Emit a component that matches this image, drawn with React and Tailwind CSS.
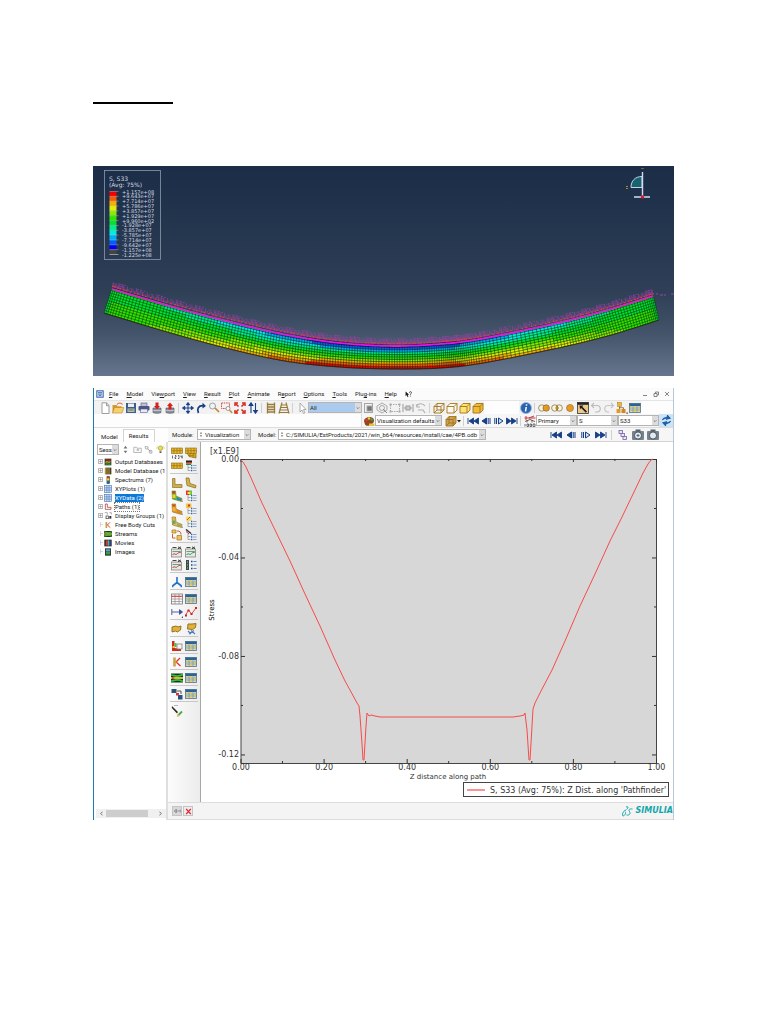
import React from "react";

/* ---------- small drawing helpers ---------- */

const N = "#173f86";

function Table() {
  return (
    <g>
      <rect x="0.5" y="1.5" width="11" height="9" fill="#dcd9b4" stroke="#56707f" strokeWidth="0.8" />
      <rect x="0.5" y="1.5" width="11" height="2.6" fill="#2a6496" />
      <path d="M1 6H11M1 8H11M4 4.500V10M8 4.500V10" stroke="#6f93a4" strokeWidth="0.7" />
      <path d="M2 5h1.500M5 5h2M9 7h1.500M5 9h2" stroke="#f3c73c" strokeWidth="1" />
    </g>
  );
}

function Bullets({ children }) {
  return (
    <g>
      {children}
      <path d="M3 5V10.500H5.500M3 7.500H5.500" stroke="#8a8a8a" strokeWidth="0.7" fill="none" />
      <path d="M6 5.500h1.300M6 8h1.300M6 10.500h1.300" stroke="#2366b8" strokeWidth="1.300" />
      <path d="M8 5.500h3.500M8 8h3.500M8 10.500h3.500" stroke="#7a9cc4" strokeWidth="0.9" />
    </g>
  );
}

function LShape({ fill = "#d9b23c", colors }) {
  return (
    <g>
      <path d="M1 1h3.500l0.500 5 6 2.500-0.500 3L1.500 9Z" fill={fill} stroke="#8c6a12" strokeWidth="0.600" />
      {colors && <path d="M1.500 1.500h2.500v2h-2.500z" fill={colors[0]} />}
      {colors && <path d="M1.500 4.500h3v3.500h-3z" fill={colors[1]} />}
      {colors && <path d="M6 7.500l4 1.500v1.500l-4-1z" fill={colors[2]} />}
      <path d="M11 11.500l1-1v1z" fill="#222" />
    </g>
  );
}

function Mesh({ y = 1 }) {
  return (
    <g>
      <rect x="0.500" y={y} width="11" height="5.500" fill="#e9b52c" stroke="#8c6a12" strokeWidth="0.600" />
      <path d={`M3 ${y}v5.500M6 ${y}v5.500M9 ${y}v5.500M0.500 ${y + 2.7}h11`} stroke="#8c6a12" strokeWidth="0.600" />
    </g>
  );
}

function XYPlotGlyph({ line = "#c33" }) {
  return (
    <g>
      <rect x="0.500" y="3" width="10" height="8" fill="#e4e8e4" stroke="#777" strokeWidth="0.700" />
      <path d="M1.500 1.500h4M7 0.800l3 2M10 0.800l-3 2" stroke="#333" strokeWidth="0.900" />
      <path d="M1.500 5.500h8" stroke="#4b8f5f" strokeWidth="0.800" />
      <path d="M1.500 9c2-3 3 1 5-1.500 1-1 2-1 3.500-1.500" stroke={line} strokeWidth="1" fill="none" />
    </g>
  );
}

function Cube({ fill, faces }) {
  return (
    <g stroke="#a3741a" strokeWidth="0.900" fill={fill}>
      <path d="M1 4.500L4 1.500h7v6.500L8 11H1Z" />
      <path d="M1 4.500h7V11M8 4.500l3-3" fill="none" />
      {faces && <path d="M4 1.500V8h7M4 8l-3 3" fill="none" />}
    </g>
  );
}

function Camera({ mark }) {
  return (
    <g>
      <rect x="0" y="2" width="12" height="9" rx="1" fill="#76838c" />
      <path d="M3.500 0.500h5v2h-5z" fill="#55626b" />
      <circle cx="6" cy="6.500" r="3.600" fill="#e2e9ee" stroke="#3c4a55" strokeWidth="0.900" />
      {mark && <path d="M4.500 6.500h3M6 5v3" stroke="#41617d" strokeWidth="0.900" />}
    </g>
  );
}

const glyphs = {
  app: <g><rect x="0.500" y="0.500" width="11" height="11" fill="#2a5ba6" /><rect x="2" y="2" width="8" height="8" fill="#e8f0fb" /><path d="M3 4h6M3 6.200h6M4 8.400h4" stroke="#23508f" strokeWidth="1.200" /></g>,
  file: <path d="M3 0.800h4.500L10 3.500v8H3ZM7.500 0.800v3H10" fill="#fff" stroke="#888" strokeWidth="0.800" />,
  open: <g><path d="M0.500 11V3h4l1 1.200h4V11Z" fill="#d39a2f" /><path d="M0.500 11l2-5.500H12L10 11Z" fill="#f7cf6c" stroke="#b47d1b" strokeWidth="0.500" /><path d="M5 2.500c1.500-2 4-2 5.500 0" stroke="#e0672c" strokeWidth="1.200" fill="none" /></g>,
  save: <g><rect x="1" y="1" width="10" height="10" fill="#3d5f8c" /><rect x="3" y="1.500" width="6" height="3.500" fill="#e8edf3" /><rect x="2.500" y="6.500" width="7" height="3.500" fill="#b9c2b3" /><path d="M3.500 8h5" stroke="#5f7747" /></g>,
  print: <g><rect x="3" y="1" width="6" height="4" fill="#b9bfd4" stroke="#555e86" strokeWidth="0.600" /><rect x="0.500" y="4" width="11" height="4.500" rx="1" fill="#4d5685" /><rect x="2.500" y="7" width="7" height="3.500" fill="#e8eaf2" stroke="#555e86" strokeWidth="0.600" /></g>,
  dbDown: <g><path d="M2 6h8v4.500c-2 1-6 1-8 0Z" fill="#8b929d" stroke="#4a505b" strokeWidth="0.600" /><path d="M2 8.500h8" stroke="#dfe3e9" strokeWidth="0.600" /><path d="M4.500 0.500h3V4H9L6 7.500 3 4h1.500Z" fill="#d81e1e" /></g>,
  dbUp: <g><path d="M2 6h8v4.500c-2 1-6 1-8 0Z" fill="#8b929d" stroke="#4a505b" strokeWidth="0.600" /><path d="M2 8.500h8" stroke="#dfe3e9" strokeWidth="0.600" /><path d="M4.500 7.500V4H3L6 0.500 9 4H7.500v3.500Z" fill="#d81e1e" /></g>,
  move: <path d="M6 1.500v9M1.500 6h9M6 0.500L4.300 2.700h3.400ZM6 11.500L4.300 9.300h3.400ZM0.500 6l2.200-1.700v3.400ZM11.500 6L9.300 4.300v3.400Z" stroke={N} fill={N} strokeWidth="1" />,
  rotate: <g><path d="M3.500 11C1.500 7 3.500 3.500 8 3.700" stroke={N} strokeWidth="1.700" fill="none" /><path d="M7.500 0.800L11 4 7.500 6.500Z" fill={N} /></g>,
  zoom: <g><circle cx="4.500" cy="4" r="3" fill="#eef3f6" stroke="#9aa0a4" /><path d="M7 6l4 4" stroke="#c2872b" strokeWidth="1.700" /></g>,
  zoomBox: <g><rect x="0.500" y="1" width="8" height="5.500" fill="none" stroke="#d33" strokeDasharray="1.500 0.800" strokeWidth="0.900" /><circle cx="7" cy="6.500" r="2" fill="#fff" stroke="#888" strokeWidth="0.800" /><path d="M8.500 8l2.700 3" stroke="#c2872b" strokeWidth="1.400" /></g>,
  fit: <g stroke="#d8281c" fill="none" strokeWidth="1.500"><path d="M1 4V1h3M8 1h3v3M11 8v3H8M4 11H1V8" /><path d="M1.500 1.500l3 3M10.500 1.500l-3 3M1.500 10.500l3-3M10.500 10.500l-3-3" /></g>,
  updown: <path d="M4 2v9M8.500 1v9M4 0.800L2.200 3.500h3.600ZM8.500 11.200L6.700 8.500h3.600Z" stroke={N} fill={N} strokeWidth="1.100" />,
  ladder: <path d="M2.500 0.500v11M9.500 0.500v11M2.500 2.500h7M2.500 5h7M2.500 7.500h7M2.500 10h7" stroke="#9a7a38" strokeWidth="1.300" />,
  ladderPersp: <path d="M4 0.500L1 11.500M8 0.500L11 11.500M3.500 3h5M3 5.500h6.500M2 8h8M1.500 10.500h9.500" stroke="#9a7a38" strokeWidth="1.200" />,
  pointer: <path d="M4 1v9l2-2 1.500 3.500 1.300-0.600L7.500 7.500H10Z" fill="#fff" stroke="#999" strokeWidth="0.800" />,
  pick: <g fill="none" stroke="#a5a5a5"><rect x="1.500" y="1.500" width="8" height="9" /><rect x="4" y="4" width="5" height="5" fill="#777" /></g>,
  pick2: <g fill="none" stroke="#aaa"><path d="M1 4l5-3 5 3v4l-5 3-5-3z" /><circle cx="6" cy="6" r="2.500" /><path d="M7 7l4 4" stroke="#888" /></g>,
  pick3: <g><rect x="1.500" y="2.500" width="9" height="7" fill="none" stroke="#aaa" strokeDasharray="1.500 1" /><path d="M0.500 1.500h2v2h-2zM9.500 1.500h2v2h-2zM0.500 8.500h2v2h-2zM9.500 8.500h2v2h-2z" fill="#aaa" /></g>,
  pick4: <g stroke="#999" fill="none"><path d="M1 2v8M11 2v8M2 6h8" /><rect x="4" y="4" width="4" height="4" fill="#ccc" /></g>,
  pick5: <path d="M1 4c3-3 7-3 9 0M2 2v3h3M3 8h5l2 3" fill="none" stroke="#b0b0b0" strokeWidth="1.200" />,
  cubeWire: <Cube fill="none" faces />,
  cubeHidden: <Cube fill="#fffaf0" />,
  cubeLight: <Cube fill="#ffe372" />,
  cubeFull: <Cube fill="#efbb36" />,
  cubeTan: <Cube fill="#c9a35a" faces />,
  info: <g><circle cx="6" cy="6" r="5.500" fill="#2b62b0" stroke="#9db9dd" strokeWidth="0.800" /><path d="M6.500 2.300v1.400M6.200 5L5.500 9.500" stroke="#fff" strokeWidth="1.500" /></g>,
  union: <g stroke="#7e6a36" strokeWidth="0.700"><circle cx="3.800" cy="6" r="3.200" fill="#fbf1d8" /><circle cx="8.200" cy="6" r="3.200" fill="#e79a22" /></g>,
  inter: <g stroke="#7e6a36" strokeWidth="0.700"><circle cx="8.200" cy="6" r="3.200" fill="#fbf1d8" /><circle cx="3.800" cy="6" r="3.200" fill="#fbf1d8" /><path d="M6 3.700a3.200 3.200 0 0 1 0 4.600 3.200 3.200 0 0 1 0-4.600Z" fill="#e79a22" /></g>,
  disc: <circle cx="6" cy="6" r="3.500" fill="#e79a22" stroke="#9a7230" strokeWidth="0.700" />,
  selArrow: <g><rect x="0.500" y="0.500" width="11" height="11" fill="#ecc88a" stroke="#333" strokeWidth="0.800" /><path d="M0.500 0.500h11v2.300H0.500z" fill="#222" /><path d="M2.500 3.500l4 0-1.200 1.300 4.700 4.700-1.200 1.200L4.200 6 3 7.200Z" fill="#1c1c1c" /></g>,
  undo: <path d="M2 3.500h5a3 3 0 0 1 0 6.500H5M4 1L1.500 3.500 4 6" fill="none" stroke="#bbb" strokeWidth="1.100" />,
  redo: <path d="M10 3.500H5a3 3 0 0 0 0 6.500h1M8 1l2.500 2.500L8 6" fill="none" stroke="#c4c4c4" strokeWidth="1.100" />,
  hier: <g><rect x="1.500" y="0.500" width="4" height="4" fill="#f0b534" stroke="#a8751a" strokeWidth="0.500" /><rect x="0.500" y="7" width="4" height="4" fill="#e79a22" /><rect x="5.500" y="7" width="4" height="4" fill="#d98516" /><path d="M3.500 4.500V7M3.500 5.700h4V7" stroke="#555" strokeWidth="0.700" fill="none" /><path d="M10.500 10.500h1.200v1.200h-1.200z" fill="#222" /></g>,
  table: <Table />,
  palette: <g><path d="M1 6c0-4 9-6 10-1 0.500 4-7 8-9 4.500Z" fill="#8c4a1e" /><circle cx="3.500" cy="5" r="1.200" fill="#e33" /><circle cx="6" cy="3.500" r="1.200" fill="#fc3" /><circle cx="8.700" cy="4.500" r="1.200" fill="#3a5" /><path d="M6 8.500h5.500v2.500H6z" fill="#e6c04a" /></g>,
  first: <path d="M1 3v6M6.500 3v6L2 6ZM11.500 3v6L7 6Z" fill={N} stroke={N} strokeWidth="0.900" />,
  prev: <path d="M6.500 3v6L2 6ZM8.200 3v6M10 3v6" fill={N} stroke={N} strokeWidth="1" />,
  next: <path d="M5.500 3v6L10 6Z M3.500 3v6M1.800 3v6" fill="#cfe0f4" stroke={N} strokeWidth="1" />,
  last: <path d="M11 3v6M5.500 3v6L10 6ZM0.500 3v6L5 6Z" fill={N} stroke={N} strokeWidth="0.900" />,
  field: <g><path d="M0.500 3h11M2 1v4M5 3l5-2" stroke="#c33" strokeWidth="1" /><path d="M1 6.500l5-2 5 2M3 5v2.500M8 5v2.500" stroke="#555" strokeWidth="0.900" fill="none" /><path d="M1 9v2.500M3 9h1.500v2.500H3ZM6 9h1.500v2.500H6ZM9 9h2v2.500H9Z" stroke="#333" strokeWidth="0.700" fill="none" /></g>,
  sync: <path d="M1.500 5.500a5 4 0 0 1 6-2.500M10.500 6.500a5 4 0 0 1-6 2.500M7 0.500l3 3-4 1.200ZM5 11.500l-3-3 4-1.200Z" fill="#1d5fa8" stroke="#1d5fa8" strokeWidth="1.100" />,
  boxes: <g fill="#e9e4f4" stroke="#7562a8" strokeWidth="0.800"><rect x="2" y="1.500" width="3.500" height="3" /><rect x="4" y="4.500" width="3.500" height="3" /><rect x="6" y="7.500" width="3.500" height="3" /></g>,
  camera: <Camera mark />,
  cameraPlain: <Camera />,
  meshNum: <g><Mesh y={1} /><path d="M1.500 8.500V11.500M4 8.500h1V10H4v1.500h1.200M7 8.500h1v3H7M10 8.500V10h1.200M11.200 8.500v3" stroke="#333" strokeWidth="0.700" fill="none" /></g>,
  meshTwo: <g><Mesh y={1} /><path d="M2 6l9 1v4L4 9.500Z" fill="#e9b52c" stroke="#8c6a12" strokeWidth="0.700" /><path d="M5 6.500v3.500M8 7v3.500M3 8l8 1.200" stroke="#8c6a12" strokeWidth="0.600" /></g>,
  mesh: <Mesh y={3} />,
  barList: <Bullets><rect x="1" y="0.500" width="6" height="1.500" fill="#222" /><rect x="1" y="2" width="6" height="1.500" fill="#c33" /><rect x="1" y="3.500" width="5" height="1.500" fill="#2a8a3a" /></Bullets>,
  lPlain: <path d="M1.500 1.500h2.500v6h7v3h-9.500z" fill="#cfae4e" stroke="#8c7324" strokeWidth="0.700" />,
  lBent: <path d="M1 1h3l1 5.500 6 2-0.500 2.500L2 8.500Z" fill="#d3b24e" stroke="#8c7324" strokeWidth="0.800" />,
  lRain: <LShape fill="#3fbf4c" colors={["#e8281c", "#f2d21c", "#2a7ad8"]} />,
  lOrange: <LShape fill="#e39a2b" colors={["#c9501c", "#eeb33c", "#d98516"]} />,
  lArrow: <LShape fill="#d9c45c" colors={["#d9b23c", "#7aa05c", "#8a6"]} />,
  listRain: <Bullets><rect x="1" y="0.500" width="3" height="4.500" fill="#e33" /><rect x="4" y="0.500" width="3" height="4.500" fill="#5c4" /><rect x="2.500" y="2" width="3" height="2" fill="#fd3" /></Bullets>,
  listOrange: <Bullets><rect x="1" y="0.500" width="5.500" height="4.500" fill="#f2c44a" /><rect x="3" y="1.500" width="2" height="2" fill="#d3361c" /></Bullets>,
  listYellow: <Bullets><rect x="1" y="0.500" width="5.500" height="4.500" fill="#f4dc6c" /><path d="M2 4l3-3" stroke="#b06a1c" /></Bullets>,
  swap: <g><path d="M1 1h4v3H1zM6 6.500h4.500v4.500H6z" fill="#eec35a" stroke="#a8751a" strokeWidth="0.700" /><path d="M6 2c3 0 4 1 4 3.500M1.500 5v4h3" stroke="#c9501c" fill="none" strokeWidth="0.900" /></g>,
  listDark: <Bullets><path d="M1 0.500l5 4" stroke="#333" strokeWidth="1.500" /><path d="M1 2.500l3 2.500" stroke="#c33" /></Bullets>,
  xyRed: <XYPlotGlyph />,
  xyGreen: <XYPlotGlyph line="#2c8f4a" />,
  dots: <g><rect x="1" y="1" width="3" height="10" fill="#3c4a44" /><path d="M2 3h1M2 6h1M2 9h1" stroke="#7fe08a" /><path d="M6 2.500h1.500M6 6h1.500M6 9.500h1.500" stroke={N} strokeWidth="1.500" /><path d="M8.500 2.500h3M8.500 6h3M8.500 9.500h3" stroke="#4e86c8" strokeWidth="1.200" /></g>,
  axes: <path d="M6 1v5.500L1.500 10M6 6.500l4.500 3.500M6 1v2M1 10.500h1.500M9.500 10.500H11" stroke="#2470c8" strokeWidth="1.600" fill="none" />,
  grid: <g><rect x="0.500" y="1" width="11" height="10" fill="#fbfbfb" stroke="#777" strokeWidth="0.800" /><path d="M4 1v10M8 1v10M0.500 6h11M0.500 8.500h11" stroke="#8a8a8a" strokeWidth="0.700" /><path d="M0.500 3.300h11" stroke="#d33" strokeWidth="1.100" /></g>,
  hArrow: <path d="M0.800 3v6M1 6h9M11.500 6L8.500 3.700v4.600ZM11 11.500h1v-1Z" stroke="#3d4f9c" fill="#3d4f9c" strokeWidth="0.900" />,
  zigzag: <g><path d="M0.500 9.500L3.500 4l3 4 4.500-6" stroke="#d33" fill="none" strokeWidth="0.900" /><path d="M2.500 3.500h2v2h-2zM5.500 7h2v2h-2zM10 1h2v2h-2zM0 8.500h2v2H0z" fill="#c22" /></g>,
  wedge: <path d="M1 4l4-1 2 1 3-1-0.500 4-3 2-2-1-3.500 1z" fill="#e0b23a" stroke="#8c6a12" strokeWidth="0.900" />,
  wedgeX: <g><path d="M3 1l4 0 4-0.500-0.500 4-3 2-5-0.500z" fill="#e0b23a" stroke="#8c6a12" strokeWidth="0.900" /><path d="M3 8l3 3M6 7.500l4 3.500M9 7.500L4 11" stroke="#4e7ab8" strokeWidth="1.100" fill="none" /></g>,
  cutL: <g><path d="M1 1h2.500v7L10 9v2H1Z" fill="#d8281c" /><path d="M3.500 3h2v4h-2z" fill="#3c4" /><path d="M1.500 6h2v2h-2z" fill="#fc3" /><rect x="6" y="4" width="5" height="5" fill="#f4f4f4" stroke="#777" strokeWidth="0.700" /></g>,
  kcut: <g><path d="M3.500 1.500v9" stroke="#c9a24e" strokeWidth="2.600" /><path d="M5 6l4-4M5 6l4.500 4" stroke="#d33" strokeWidth="1.300" /><path d="M4 6h3" stroke="#e79a22" /></g>,
  stream: <g><rect x="0" y="1.500" width="12" height="9" fill="#16351e" /><path d="M0 3c4 0 5 3 12-0.500M0 9c4 0 5-3 12 0.500" stroke="#35c240" strokeWidth="1.700" fill="none" /><path d="M0 6h12" stroke="#f3d43c" strokeWidth="1.700" /><path d="M1 5l3 1-3 1.500z" fill="#d33" /></g>,
  chain: <g fill="#27537d"><rect x="0.500" y="1" width="5" height="4" /><rect x="7" y="7" width="4.500" height="4.500" /><rect x="5" y="5" width="3" height="2.500" fill="#d33" /><path d="M6 3h4v3" stroke="#555" fill="none" /></g>,
  pen: <g><path d="M1 1l6 6-1 1.500L0.800 3Z" fill="#3a2c22" /><path d="M3 0.500h4" stroke="#999" strokeWidth="0.700" /><path d="M7 10.500l4-4" stroke="#3cae4c" strokeWidth="1.800" /><path d="M6 11.300l2.500-1.300" stroke="#f3b43c" strokeWidth="1.500" /></g>,
  odb: <g><rect x="1" y="1" width="10" height="10" fill="#1e2a20" /><path d="M2 3.500c3-2 5 1 8-1" stroke="#d8281c" strokeWidth="1.800" fill="none" /><path d="M2 6.500c3-2 5 1 8-1" stroke="#f0c52c" strokeWidth="1.600" fill="none" /><path d="M2 9.500c3-2 5 1 8-1" stroke="#36b53c" strokeWidth="1.800" fill="none" /></g>,
  mdb: <g><rect x="2" y="1" width="9" height="10" fill="#2c2c20" /><path d="M0.500 3h9M0.500 6h9M0.500 9h9" stroke="#e3bb3a" strokeWidth="1.400" /></g>,
  spectrum: <g><rect x="4" y="0.500" width="4.500" height="11" fill="#222" /><rect x="4.600" y="1" width="3.300" height="3" fill="#e8281c" /><rect x="4.600" y="3.500" width="3.300" height="2.500" fill="#f4e02c" /><rect x="4.600" y="6" width="3.300" height="2.500" fill="#3fcf3c" /><rect x="4.600" y="8.500" width="3.300" height="2.500" fill="#2c4ae0" /></g>,
  blueGrid: <g><rect x="1" y="1" width="10" height="10" fill="#dbe8f8" stroke="#3c6cb4" strokeWidth="0.900" /><path d="M4.300 1v10M7.600 1v10M1 4.300h10M1 7.600h10" stroke="#3c6cb4" strokeWidth="0.900" /></g>,
  path: <path d="M2 1.500v8h8.500v-3H5V1.500Z" fill="#fff" stroke="#a33" strokeWidth="1.100" />,
  group: <g><path d="M1 1h4v3M8 1h3v3" stroke="#888" fill="none" /><rect x="3" y="6" width="3.500" height="4" fill="#fff" stroke="#333" /><rect x="8" y="6" width="3" height="4" fill="#333" /></g>,
  movie: <g><rect x="0.500" y="1" width="11" height="10" fill="#222" /><rect x="2.500" y="2" width="3" height="8" fill="#d33" /><rect x="5.500" y="2" width="2" height="8" fill="#3c4" /><rect x="7.500" y="2" width="2.500" height="8" fill="#44d" /></g>,
  image: <g><rect x="1.500" y="0.500" width="9" height="11" fill="#2c3c34" /><rect x="3" y="2" width="6" height="3" fill="#5ca8d8" /><rect x="3" y="5.500" width="6" height="4" fill="#3c9a4c" /></g>,
  spin: <path d="M6 1L3.500 4.500h5ZM6 11L3.500 7.500h5Z" fill="#777" />,
  folder: <path d="M1 10V3h3.500l1 1.300H11V10ZM5 8l2-2M7 8V6H5" fill="#fafafa" stroke="#999" strokeWidth="0.900" />,
  link: <path d="M1.500 2l4 0.500L5 5.500 2 5ZM5 5l4 4M7 7l3.500 0.500V11L7 10.500Z" fill="none" stroke="#999" strokeWidth="1" />,
  bulb: <g><path d="M6 1.500c-4 0-3 4-1.500 5.500h3C9 5.500 10 1.500 6 1.500Z" fill="#f4e13c" stroke="#6b6b1a" strokeWidth="0.700" /><path d="M4.700 8.500h2.600v2H4.700z" fill="#444" /><path d="M0.500 4h1.500M10 4h1.500M1.500 1l1 1M10.500 1l-1 1" stroke="#998a1a" strokeWidth="0.900" /></g>,
  whatsThis: <g><path d="M1 1v8l2-2 1.500 3.500 1.300-0.600L4.500 6.500H7Z" fill="#111" /><path d="M7.500 3c0-2.500 4-2.500 3.500 0 0 1.500-1.700 1.500-1.700 3.500M9.200 8v1.500" stroke="#111" strokeWidth="1.200" fill="none" /></g>,
  back: <path d="M11 6H2M5 3L2 6l3 3M5 3v6M11 4v4" stroke="#888" strokeWidth="1.200" fill="none" />,
  cross: <path d="M2 1.500l8 9M10 1.500l-8 9" stroke="#e0202c" strokeWidth="2.200" />,
};

function Icon({ name, className = "size-[12px]" }) {
  return (
    <svg viewBox="0 0 12 12" className={`block shrink-0 ${className}`} aria-hidden="true">
      {glyphs[name]}
    </svg>
  );
}

function Tool({ name, className = "h-[13px] w-[13px]", icon }) {
  return (
    <button type="button" aria-label={name} className={`flex shrink-0 items-center justify-center ${className}`}>
      <Icon name={name} className={icon} />
    </button>
  );
}

const Sep = () => <span className="mx-[2px] h-[10px] w-px shrink-0 bg-[#d0d0d0]" />;

function Select({ label, value, className, tone = "bg-white", spinner = false }) {
  return (
    <span className={`flex h-[11px] shrink-0 items-center border border-[#b4b4b4] ${tone} ${className}`}>
      {spinner && <Icon name="spin" className="h-[9px] w-[6px]" />}
      <select aria-label={label} className="h-full w-full min-w-0 appearance-none bg-transparent pl-px text-[6px] leading-[9px] text-[#222] outline-none">
        <option>{value}</option>
      </select>
      <span className="pointer-events-none flex h-full w-[6px] shrink-0 items-center justify-center bg-[#dcdcdc]">
        <svg viewBox="0 0 6 6" className="size-[4px]" aria-hidden="true">
          <path d="M1 2l2 2 2-2" fill="none" stroke="#555" />
        </svg>
      </span>
    </span>
  );
}

/* ---------- deformed beam ---------- */

const stations = [
  [112, 288, 104, 313], [170, 305, 164, 331], [231, 321, 226, 348], [288, 334, 285, 361],
  [340, 342, 339, 367], [392, 345, 392, 369], [440, 343, 441, 368], [480, 338, 483, 363],
  [553, 323, 558, 348], [604, 310, 611, 335], [653, 295, 659, 320],
];

function section(u) {
  const t = u * (stations.length - 1);
  const i = Math.min(Math.floor(t), stations.length - 2);
  const f = t - i;
  const p = (k) => stations[Math.max(0, Math.min(stations.length - 1, k))];
  const [a, b, c, d] = [p(i - 1), p(i), p(i + 1), p(i + 2)];
  return b.map((_, k) =>
    0.5 * (2 * b[k] + (c[k] - a[k]) * f + (2 * a[k] - 5 * b[k] + 4 * c[k] - d[k]) * f * f + (3 * b[k] - a[k] - 3 * c[k] + d[k]) * f * f * f)
  );
}

const spectrum = ["#f50000", "#f55d00", "#f5b000", "#e0f000", "#85ee00", "#2ee600", "#00e42e", "#00ee8b", "#00eee0", "#00b0f5", "#0060f5", "#0000f5"];

const COLS = 196;
const ROWS = 10;

function buildBeam() {
  const fills = spectrum.map(() => "");
  const secs = Array.from({ length: COLS + 1 }, (_, i) => section(i / COLS));
  const at = (s, v) => `${(s[0] + (s[2] - s[0]) * v - 93).toFixed(1)} ${(s[1] + (s[3] - s[1]) * v - 166).toFixed(1)}`;
  for (let i = 0; i < COLS; i++) {
    const u = (i + 0.5) / COLS;
    const m = Math.min(1, Math.max(0, Math.min(u, 1 - u) - 0.01) / 0.37);
    for (let j = 0; j < ROWS; j++) {
      const v = (j + 0.5) / ROWS;
      const s = m * (2 * v - 1) * 1.05;
      const k = Math.max(0, Math.min(11, Math.floor((1 - s) * 6)));
      fills[k] += `M${at(secs[i], j / ROWS)}L${at(secs[i + 1], j / ROWS)}L${at(secs[i + 1], (j + 1) / ROWS)}L${at(secs[i], (j + 1) / ROWS)}Z`;
    }
  }
  let lines = "";
  secs.forEach((s) => { lines += `M${at(s, 0)}L${at(s, 1)}`; });
  for (let j = 0; j <= ROWS; j++) lines += "M" + secs.map((s) => at(s, j / ROWS)).join("L");
  const edge = (v) => "M" + secs.map((s) => at(s, v)).join("L");
  let marks = "";
  let red = "";
  for (let i = 0; i < 420; i++) {
    const s = section(i / 420);
    const r = (i * 7919) % 13;
    const h = 3 + (r % 4);
    const x = s[0] - 93;
    const y = s[1] - 166;
    marks += `M${x.toFixed(1)} ${(y - h).toFixed(1)}h${1 + (r % 2)}M${(x + 0.6).toFixed(1)} ${(y - 1).toFixed(1)}v-${((r * 5) % 6) + 1}`;
    if (r % 3 === 0) red += `M${x.toFixed(1)} ${(y - 1.5).toFixed(1)}h1.600`;
  }
  return { fills, lines, top: edge(0.04), bottom: edge(1), marks, red };
}

const beam = buildBeam();

const legendLabels = [
  "+1.157e+08", "+9.643e+07", "+7.714e+07", "+5.786e+07", "+3.857e+07", "+1.929e+07", "+9.960e+02",
  "-1.928e+07", "-3.857e+07", "-5.785e+07", "-7.714e+07", "-9.642e+07", "-1.157e+08", "-1.225e+08",
];

function ContourView() {
  return (
    <svg viewBox="0 0 581 210" className="block w-full" role="img" aria-label="Stress contour of a bent beam">
      <defs>
        <linearGradient id="sky" x1="0" y1="0" x2="0" y2="1">
          <stop offset="0" stopColor="#1b2d47" />
          <stop offset="0.600" stopColor="#2e3f56" />
          <stop offset="0.800" stopColor="#44546a" />
          <stop offset="1" stopColor="#66768e" />
        </linearGradient>
      </defs>
      <rect width="581" height="210" fill="url(#sky)" />
      <rect x="11.500" y="4.500" width="56" height="89" fill="none" stroke="#8e9aab" strokeWidth="0.800" />
      <g fill="#d5dae2" fontFamily="'DejaVu Sans', sans-serif">
        <text x="16" y="15" fontSize="6">S, S33</text>
        <text x="16" y="21" fontSize="6">(Avg: 75%)</text>
        {legendLabels.map((l, i) => (
          <text key={l + i} x="29" y={27.500 + (i * 63) / 13} fontSize="5">{l}</text>
        ))}
      </g>
      {[...spectrum, "#454540"].map((c, i) => (
        <g key={c}>
          <rect x="16.500" y={25.500 + (i * 63) / 13} width="7" height={63 / 13} fill={c} />
          <path d={`M16.500 ${25.500 + (i * 63) / 13}h9`} stroke="#cfd5dd" strokeWidth="0.400" />
        </g>
      ))}
      <path d="M16.500 88.500h9" stroke="#cfd5dd" strokeWidth="0.600" />

      <path d={beam.marks} stroke="#a040aa" strokeWidth="0.900" opacity="0.700" />
      {beam.fills.map((d, i) => <path key={i} d={d} fill={spectrum[i]} />)}
      <path d={beam.lines} stroke="#06220a" strokeWidth="0.650" opacity="0.750" fill="none" />
      <path d={beam.bottom} stroke="#2a1208" strokeWidth="0.600" fill="none" />
      <path d={beam.red} stroke="#f03a3a" strokeWidth="1.300" />
      <path d={beam.top} stroke="#e818d0" strokeWidth="1.800" fill="none" />
      <path d="M558 128h3M563 128h2M567 129h3M571 129h2M578 128h3" stroke="#7a3f94" strokeWidth="1.500" />

      <path d="M549 21.500V10.500C542 10.500 538 15 538 21.500Z" fill="#17646f" stroke="#c3d4ee" strokeWidth="1" />
      <path d="M549.500 6V31M541 31h16" stroke="#d5daf4" strokeWidth="1.400" />
      <circle cx="549.500" cy="31" r="1.700" fill="#e0182c" />
      <path d="M548.500 3l1-1 1 1M533 20.500h2M533 22.500h2" stroke="#a99b2c" strokeWidth="0.900" fill="none" />
    </svg>
  );
}

/* ---------- XY plot ---------- */

const curve = "M241 460L243 462 246 467 252 480 262 503 275 530 290 561 305 594 320 626 335 660 345 681 350 690 357 703 359 706 360 716 362 744 363 760 364 760 366 726 367 713 369 716 371 715 375 716 380 717 513 717 520 716 524 715 525 713 527 730 529 760 530 760 532 726 533 709 535 703 541 691 552 670 565 641 580 606 595 574 610 541 622 517 634 492 643 473 648 464 651 460 653 459";

function XYPlot() {
  const ticksX = [0, 0.2, 0.4, 0.6, 0.8, 1];
  const ticksY = [0, 0.04, 0.08, 0.12];
  return (
    <svg viewBox="201 444 472 358" className="block w-full" role="img" aria-label="Stress along Z distance" fontFamily="'DejaVu Sans', sans-serif" fill="#333">
      <rect x="241" y="459.500" width="415.500" height="304" fill="#d7d7d7" stroke="#444" strokeWidth="1" />
      {ticksX.map((t) => (
        <g key={t}>
          <path d={`M${241 + t * 415.500} 763v-4M${241 + t * 415.500} 459v3`} stroke="#333" />
          {t < 1 && <path d={`M${282.500 + t * 415.500} 763v-2M${282.500 + t * 415.500} 459v2`} stroke="#333" />}
          <text x={241 + t * 415.500} y="770" fontSize="8" textAnchor="middle">{t.toFixed(2)}</text>
        </g>
      ))}
      {ticksY.map((t) => (
        <g key={t}>
          <path d={`M241 ${459.500 + t * 2462}h4M656 ${459.500 + t * 2462}h-4`} stroke="#333" />
          {t < 0.12 && <path d={`M241 ${508.500 + t * 2462}h2M656 ${508.500 + t * 2462}h-2`} stroke="#333" />}
          <text x="239" y={462 + t * 2462} fontSize="8" textAnchor="end">{t ? `-${t.toFixed(2)}` : "0.00"}</text>
        </g>
      ))}
      <text x="210" y="454" fontSize="8">[x1.E9]</text>
      <text x="448" y="779" fontSize="7" textAnchor="middle">Z distance along path</text>
      <text transform="translate(214 610) rotate(-90)" fontSize="7" textAnchor="middle" fill="#000">Stress</text>
      <path d={curve} fill="none" stroke="#f84a4a" strokeWidth="1" strokeLinejoin="round" />
      <rect x="463.500" y="782.500" width="205" height="14" fill="#fff" stroke="#444" />
      <path d="M467 790h18" stroke="#f84a4a" strokeWidth="1.200" />
      <text x="490" y="793" fontSize="8">S, S33 (Avg: 75%): Z Dist. along 'Pathfinder'</text>
    </svg>
  );
}

/* ---------- application chrome ---------- */

const menus = [
  ["", "F", "ile"], ["", "M", "odel"], ["Vie", "w", "port"], ["", "V", "iew"], ["", "R", "esult"], ["", "P", "lot"],
  ["", "A", "nimate"], ["R", "e", "port"], ["", "O", "ptions"], ["", "T", "ools"], ["Plu", "g", "-ins"], ["", "H", "elp"],
];

const tree = [
  ["odb", "Output Databases", true], ["mdb", "Model Database (1", true], ["spectrum", "Spectrums (7)", true],
  ["blueGrid", "XYPlots (1)", true], ["blueGrid", "XYData (2)", true, "bg-[#0a78d7] text-white"],
  ["path", "Paths (1)", true, "outline-1 outline-dotted outline-[#777]"], ["group", "Display Groups (1)", true],
  ["kcut", "Free Body Cuts"], ["stream", "Streams"], ["movie", "Movies"], ["image", "Images"],
];

const toolbox = [
  ["meshNum", "meshTwo", "mesh", "barList"],
  ["lPlain", "lBent", "lRain", "listRain", "lOrange", "listOrange", "lArrow", "listYellow", "swap", "listDark"],
  ["xyRed", "xyGreen", "xyRed", "dots"],
  ["axes", "table"],
  ["grid", "table", "hArrow", "zigzag"],
  ["wedge", "wedgeX"],
  ["cutL", "table"],
  ["kcut", "table"],
  ["stream", "table"],
  ["chain", "table"],
];

function MenuBar() {
  return (
    <nav className="flex h-[13px] items-center border-b border-[#e4e4e4] bg-[#fbfbfb] pl-[2px] pr-[3px]">
      <Icon name="app" className="mr-[5px] size-[8px]" />
      <div className="flex items-center gap-[8px]">
        {menus.map(([a, b, c]) => (
          <button type="button" key={a + b + c}>{a}<span className="underline">{b}</span>{c}</button>
        ))}
        <Icon name="whatsThis" className="size-[7px]" />
      </div>
      <div className="ml-auto flex items-center gap-[5px] text-[#777]">
        {["M1 4.500h4", "M1 2.500h3v3h-3zM2.500 2.500v-1.500h3v3h-1.500", "M1 1l4 4M5 1l-4 4"].map((d, i) => (
          <button type="button" key={d} aria-label={["Minimize", "Restore", "Close"][i]}>
            <svg viewBox="0 0 6 6" className="size-[6px]"><path d={d} fill="none" stroke="currentColor" strokeWidth="0.900" /></svg>
          </button>
        ))}
      </div>
    </nav>
  );
}

function ToolBars() {
  return (
    <>
      <div className="flex h-[13px] items-center">
        <div className="flex h-[13px] items-center bg-[#f2f2f2] pl-[4px]">
          {["file", "open", "save", "print", "dbDown", "dbUp"].map((n) => <Tool key={n} name={n} />)}
          <Sep />
          {["move", "rotate", "zoom", "zoomBox", "fit", "updown"].map((n) => <Tool key={n} name={n} />)}
          <Sep />
          {["ladder", "ladderPersp"].map((n) => <Tool key={n} name={n} />)}
          <Sep />
          <Tool name="pointer" />
          <Select label="Selection filter" value="All" className="w-[54px]" tone="bg-[#abcbee]" />
          {["pick", "pick2", "pick3", "pick4", "pick5"].map((n) => <Tool key={n} name={n} />)}
          <Sep />
          {["cubeWire", "cubeHidden", "cubeLight", "cubeFull"].map((n) => <Tool key={n} name={n} />)}
        </div>
        <div className="ml-auto mr-[32px] flex h-[13px] items-center bg-[#f2f2f2]">
          <Tool name="info" />
          <Sep />
          {["union", "inter", "disc", "selArrow", "undo", "redo", "hier", "table"].map((n) => <Tool key={n} name={n} />)}
        </div>
      </div>
      <div className="flex h-[14px] items-center justify-end border-b border-[#dcdcdc]">
        <div className="flex h-full items-center border-l border-[#ddd] bg-[#f6f6f6]">
          <Tool name="palette" />
          <Select label="Colour mapping" value="Visualization defaults" className="w-[67px]" />
          <Tool name="cubeTan" className="ml-[2px] h-[13px] w-[13px]" />
          <svg viewBox="0 0 4 4" className="size-[4px]" aria-hidden="true"><path d="M0 1h4L2 3.500Z" fill="#222" /></svg>
          <Sep />
          {["first", "prev", "next", "last"].map((n) => <Tool key={n} name={n} />)}
          <Sep />
          <Tool name="field" />
          <Select label="Variable type" value="Primary" className="w-[41px]" />
          <Select label="Field variable" value="S" className="w-[41px]" />
          <Select label="Component" value="S33" className="w-[41px]" />
          <Tool name="sync" className="h-[13px] w-[14px] bg-[#cde4f7]" icon="size-[11px]" />
        </div>
      </div>
    </>
  );
}

function ContextBar() {
  return (
    <div className="flex h-[14px] items-center border-b border-[#d4d4d4] bg-[#f6f6f6] pl-[4px]">
      <span className="w-[25px]">Module:</span>
      <Select label="Module" value="Visualization" className="w-[54px]" spinner />
      <span className="ml-[7px] w-[20px]">Model:</span>
      <Select label="Model" value="C:/SIMULIA/EstProducts/2021/win_b64/resources/install/cae/4PB.odb" className="w-[208px]" spinner />
      <div className="ml-auto mr-[14px] flex items-center gap-[2px]">
        {["first", "prev", "next", "last"].map((n) => <Tool key={n} name={n} />)}
        <Sep />
        {["boxes", "camera", "cameraPlain"].map((n) => <Tool key={n} name={n} />)}
      </div>
    </div>
  );
}

function ResultsPanel() {
  return (
    <aside className="flex w-[74px] shrink-0 flex-col pl-[2px]">
      <div className="flex h-[14px] items-end">
        <button type="button" className="px-[5px] pb-px leading-[8px]">Model</button>
        <button type="button" className="h-[13px] border border-b-0 border-[#d4d4d4] bg-white px-[5px] leading-[10px]">Results</button>
      </div>
      <div className="flex min-h-0 flex-1 flex-col border-r-2 border-[#dedede] bg-white">
        <div className="flex h-[15px] items-center justify-between pl-px">
          <Select label="Session data" value="Sessi" className="w-[22px]" />
          {["spin", "folder", "link", "bulb"].map((n) => <Tool key={n} name={n} className="h-[13px] w-[11px]" icon="size-[9px]" />)}
        </div>
        <ul className="flex-1">
          {tree.map(([icon, label, expandable, tone = ""]) => (
            <li key={label} className="flex h-[9px] items-center whitespace-nowrap pl-[2px]">
              <span className="flex w-[6px] shrink-0 items-center">
                {expandable ? (
                  <svg viewBox="0 0 6 6" className="size-[5px]"><path d="M0.500 0.500h5v5h-5zM1.500 3h3M3 1.500v3" fill="none" stroke="#888" strokeWidth="0.800" /></svg>
                ) : (
                  <svg viewBox="0 0 6 6" className="size-[5px]"><path d="M3 0v6M3 3h3" fill="none" stroke="#bbb" strokeWidth="0.700" /></svg>
                )}
              </span>
              <Icon name={icon} className="mr-[3px] size-[8px]" />
              <span className={`leading-[8px] ${tone}`}>{label}</span>
            </li>
          ))}
        </ul>
        <div className="mb-[2px] flex h-[9px] items-center gap-[3px] bg-[#f0f0f0] px-[4px] text-[#444]">
          <svg viewBox="0 0 4 6" className="h-[5px] w-[3px]" aria-hidden="true"><path d="M3.500 0.500L1 3l2.500 2.500" fill="none" stroke="#444" /></svg>
          <span className="h-[7px] w-[42px] bg-[#cdcdcd]" />
          <svg viewBox="0 0 4 6" className="ml-auto h-[5px] w-[3px]" aria-hidden="true"><path d="M0.500 0.500L3 3 0.500 5.500" fill="none" stroke="#444" /></svg>
        </div>
      </div>
    </aside>
  );
}

function Toolbox() {
  return (
    <div className="w-[33px] shrink-0 border-r border-[#a8a8a8] bg-linear-to-r from-[#fcfcfc] to-[#ececec] pt-[2px]">
      {toolbox.map((group, i) => (
        <div key={i} className={`mx-[2px] grid grid-cols-2 border-b border-[#c8c8c8] pb-px ${i < 7 ? "pt-[2px]" : "pt-px"}`}>
          {group.map((n, j) => <Tool key={j} name={n} className="h-[13px] w-[14px]" />)}
        </div>
      ))}
      <div className="mx-[2px] pt-[2px]"><Tool name="pen" className="h-[13px] w-[14px]" /></div>
    </div>
  );
}

function StatusBar() {
  return (
    <footer className="flex h-[18px] items-center gap-[1px] border-y border-[#dcdcdc] bg-[#f4f4f4] pl-[4px]">
      <button type="button" aria-label="Back" className="flex size-[10px] items-center justify-center border border-[#c4c4c4] bg-[#d8d8d8]"><Icon name="back" className="size-[8px]" /></button>
      <button type="button" aria-label="Cancel" className="flex size-[10px] items-center justify-center border border-[#c4c4c4] bg-[#ececec]"><Icon name="cross" className="size-[7px]" /></button>
      <div className="ml-auto flex items-center gap-[3px] text-[#12a5ab]">
        <svg viewBox="0 0 22 22" className="size-[11px]" aria-hidden="true">
          <path d="M8 2c4-2 6 1 1 5M8 8C1 10 0 19 2 20c4 0 7-8 4-8M21 6c-5-1-9 1-6 5 3 5-1 8-6 7" fill="none" stroke="currentColor" strokeWidth="2" />
        </svg>
        <span className="font-['DejaVu_Sans',sans-serif] text-[8px] font-bold italic leading-[10px]">SIMULIA</span>
      </div>
    </footer>
  );
}

export default function App() {
  return (
    <main className="min-h-screen bg-white pb-16 pl-[93px] pr-[94px] pt-[102px] font-['Roboto','Noto_Sans',sans-serif] text-[6px] leading-[8px] text-[#222]">
      <hr className="w-[80px] border-t-2 border-black" />
      <section className="mt-[62px]">
        <ContourView />
      </section>
      <section className="mt-[12px] border-l border-r border-l-[#1e7bb0] border-r-[#b8c8dc] bg-[#fdfdfd]">
        <MenuBar />
        <ToolBars />
        <div className="flex">
          <ResultsPanel />
          <div className="flex min-w-0 flex-1 flex-col">
            <ContextBar />
            <div className="flex">
              <Toolbox />
              <div className="min-w-0 flex-1 bg-white pt-[2px]">
                <XYPlot />
              </div>
            </div>
            <StatusBar />
          </div>
        </div>
      </section>
    </main>
  );
}
